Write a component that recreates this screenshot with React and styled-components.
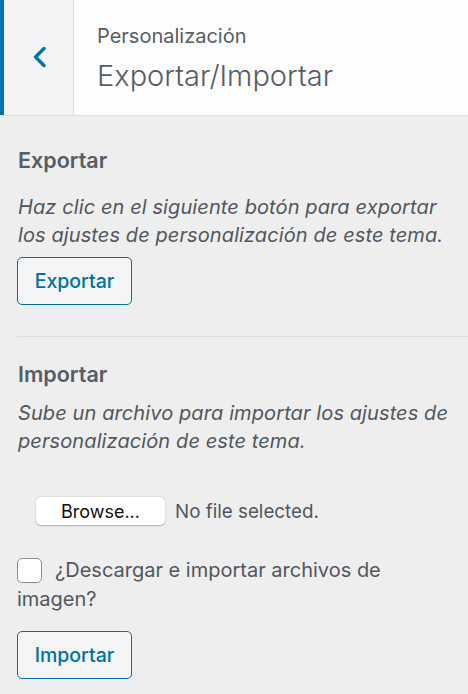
import React from "react";
import styled, { createGlobalStyle } from "styled-components";

const Global = createGlobalStyle`
  html, body { margin: 0; padding: 0; background: #eeeeee; }
  body { font-family: Inter, "Noto Sans", "Liberation Sans", sans-serif; color: #555d66; }
  * { box-sizing: border-box; }
`;

const Panel = styled.div`
  width: 468px;
  min-height: 694px;
  background: #eeeeee;
  display: flex;
  flex-direction: column;
`;

const Header = styled.header`
  display: flex;
  height: 116px;
  background: #fdfdfd;
  border-bottom: 1px solid #dddddd;
`;

const BackButton = styled.button`
  width: 74px;
  flex: 0 0 74px;
  border: none;
  border-left: 4px solid #0073aa;
  border-right: 1px solid #dddddd;
  background: #f3f3f5;
  color: #0073aa;
  display: flex;
  align-items: center;
  justify-content: center;
  padding: 0 0 2px 0;
  cursor: pointer;
`;

const TitleBlock = styled.div`
  display: flex;
  flex-direction: column;
  padding: 24px 0 0 23px;
`;

const Action = styled.span`
  font-size: 20px;
  line-height: 24px;
  color: #555d66;
`;

const Title = styled.h1`
  margin: 10px 0 0 0;
  font-size: 29px;
  line-height: 36px;
  font-weight: 300;
  color: #555d66;
`;

const Content = styled.main`
  padding: 0 10px 0 18px;
  display: flex;
  flex-direction: column;
`;

const Section = styled.section`
  display: flex;
  flex-direction: column;
  padding-top: ${(p) => p.$top}px;
`;

const Heading = styled.h2`
  margin: 0;
  font-size: 21.5px;
  line-height: 28px;
  font-weight: 600;
  color: #555d66;
`;

const Description = styled.p`
  margin: ${(p) => p.$mt}px 0 0 0;
  font-size: 20px;
  line-height: 28px;
  letter-spacing: 0.1px;
  font-style: italic;
  color: #50575e;
`;

const ActionButton = styled.button`
  align-self: flex-start;
  margin: ${(p) => p.$mt}px 0 0 -1px;
  width: 115px;
  height: 48px;
  border: 1px solid #0071a1;
  border-radius: 5px;
  background: #f3f5f6;
  color: #0071a1;
  font-family: inherit;
  font-size: 19.5px;
  font-weight: 500;
  cursor: pointer;
`;

const Divider = styled.hr`
  border: none;
  border-top: 1px solid #dddddd;
  margin: 31px -10px 0 -1px;
`;

const FileRow = styled.div`
  display: flex;
  align-items: center;
  gap: 10px;
  margin: 42px 0 0 18px;
`;

const BrowseButton = styled.button`
  width: 129px;
  height: 28px;
  border: none;
  border-radius: 5px;
  background: #ffffff;
  box-shadow: 0 0.5px 1.5px rgba(0, 0, 0, 0.3);
  color: #111;
  font-family: inherit;
  font-size: 18px;
  padding: 0;
`;

const FileName = styled.span`
  font-size: 18.8px;
  color: #50575e;
`;

const CheckLabel = styled.label`
  display: block;
  max-width: 420px;
  margin: 31px 0 0 -1px;
  font-size: 20px;
  line-height: 29px;
  color: #50575e;
`;

const Checkbox = styled.span`
  display: inline-block;
  width: 25px;
  height: 25px;
  border: 1px solid #8c8f94;
  border-radius: 5px;
  background: #fff;
  vertical-align: -6px;
  margin-right: 13px;
`;

export default function App() {
  return (
    <>
      <Global />
      <Panel>
        <Header>
          <BackButton aria-label="Volver">
            <svg width="14" height="22" viewBox="0 0 14 22">
              <path d="M12 2.5 L3.5 11 L12 19.5" fill="none" stroke="#0073aa" strokeWidth="3.4" strokeLinecap="round" strokeLinejoin="round" />
            </svg>
          </BackButton>
          <TitleBlock>
            <Action>Personalización</Action>
            <Title>Exportar/Importar</Title>
          </TitleBlock>
        </Header>
        <Content>
          <Section $top={30}>
            <Heading>Exportar</Heading>
            <Description $mt={19}>
              Haz clic en el siguiente botón para exportar los ajustes de personalización de este tema.
            </Description>
            <ActionButton $mt={8}>Exportar</ActionButton>
          </Section>
          <Divider />
          <Section $top={23}>
            <Heading>Importar</Heading>
            <Description $mt={11}>
              Sube un archivo para importar los ajustes de personalización de este tema.
            </Description>
            <FileRow>
              <BrowseButton>Browse...</BrowseButton>
              <FileName>No file selected.</FileName>
            </FileRow>
            <CheckLabel>
              <Checkbox />
              ¿Descargar e importar archivos de imagen?
            </CheckLabel>
            <ActionButton $mt={17}>Importar</ActionButton>
          </Section>
        </Content>
      </Panel>
    </>
  );
}
